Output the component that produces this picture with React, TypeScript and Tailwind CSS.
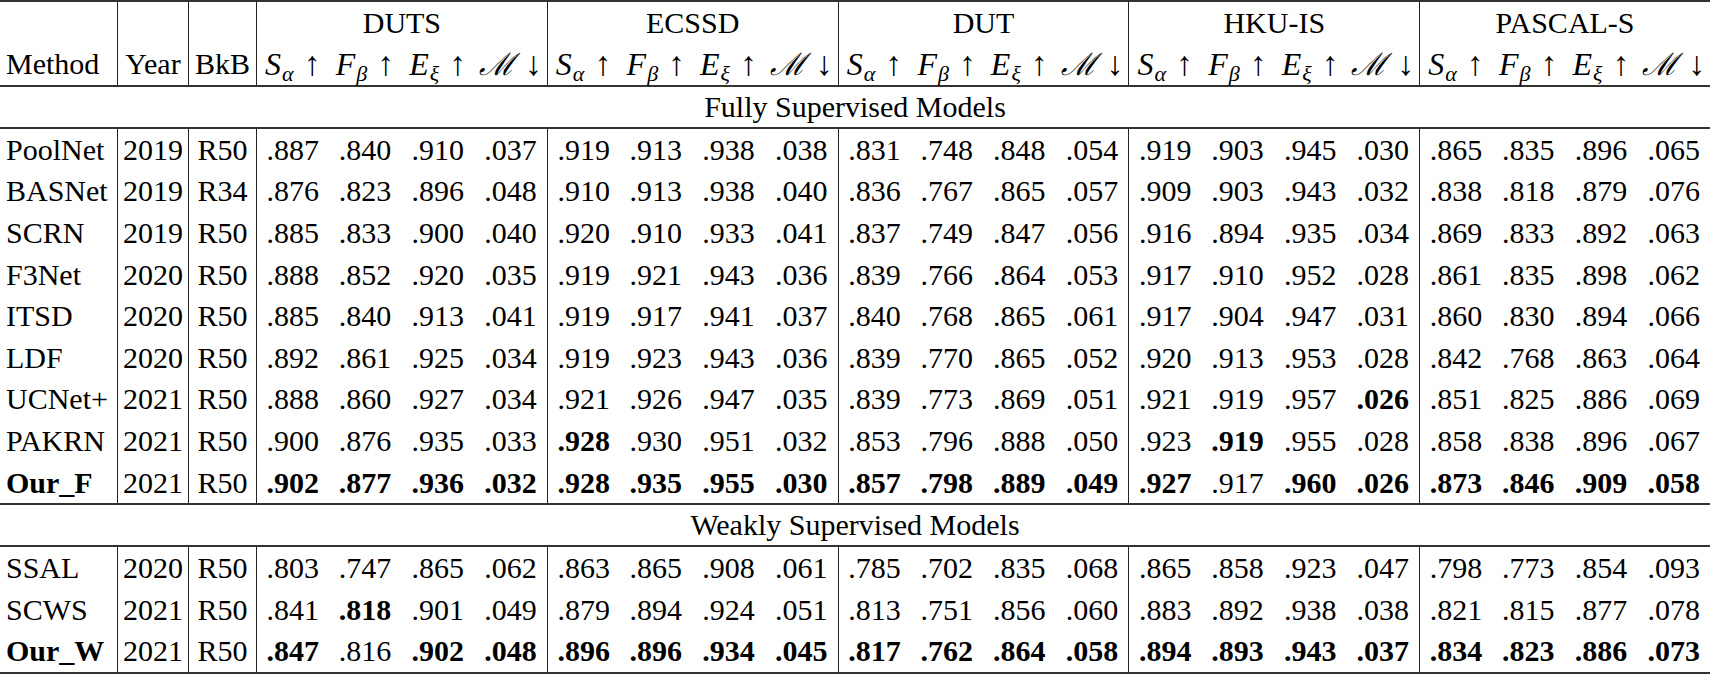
type Cell = { v: string; b?: boolean };

const cols = "grid grid-cols-[117px_71px_68px_repeat(20,minmax(0,1fr))]";
const datasets = ["DUTS", "ECSSD", "DUT", "HKU-IS", "PASCAL-S"];

// "*" marks a bold value
const parse = (s: string): Cell[] =>
  s.split(" ").map((t) => (t.startsWith("*") ? { v: t.slice(1), b: true } : { v: t }));

const fully: [string, string, string, string, boolean?][] = [
  ["PoolNet", "2019", "R50", ".887 .840 .910 .037 .919 .913 .938 .038 .831 .748 .848 .054 .919 .903 .945 .030 .865 .835 .896 .065"],
  ["BASNet", "2019", "R34", ".876 .823 .896 .048 .910 .913 .938 .040 .836 .767 .865 .057 .909 .903 .943 .032 .838 .818 .879 .076"],
  ["SCRN", "2019", "R50", ".885 .833 .900 .040 .920 .910 .933 .041 .837 .749 .847 .056 .916 .894 .935 .034 .869 .833 .892 .063"],
  ["F3Net", "2020", "R50", ".888 .852 .920 .035 .919 .921 .943 .036 .839 .766 .864 .053 .917 .910 .952 .028 .861 .835 .898 .062"],
  ["ITSD", "2020", "R50", ".885 .840 .913 .041 .919 .917 .941 .037 .840 .768 .865 .061 .917 .904 .947 .031 .860 .830 .894 .066"],
  ["LDF", "2020", "R50", ".892 .861 .925 .034 .919 .923 .943 .036 .839 .770 .865 .052 .920 .913 .953 .028 .842 .768 .863 .064"],
  ["UCNet+", "2021", "R50", ".888 .860 .927 .034 .921 .926 .947 .035 .839 .773 .869 .051 .921 .919 .957 *.026 .851 .825 .886 .069"],
  ["PAKRN", "2021", "R50", ".900 .876 .935 .033 *.928 .930 .951 .032 .853 .796 .888 .050 .923 *.919 .955 .028 .858 .838 .896 .067"],
  ["Our_F", "2021", "R50", "*.902 *.877 *.936 *.032 *.928 *.935 *.955 *.030 *.857 *.798 *.889 *.049 *.927 .917 *.960 *.026 *.873 *.846 *.909 *.058", true],
];

const weakly: [string, string, string, string, boolean?][] = [
  ["SSAL", "2020", "R50", ".803 .747 .865 .062 .863 .865 .908 .061 .785 .702 .835 .068 .865 .858 .923 .047 .798 .773 .854 .093"],
  ["SCWS", "2021", "R50", ".841 *.818 .901 .049 .879 .894 .924 .051 .813 .751 .856 .060 .883 .892 .938 .038 .821 .815 .877 .078"],
  ["Our_W", "2021", "R50", "*.847 .816 *.902 *.048 *.896 *.896 *.934 *.045 *.817 *.762 *.864 *.058 *.894 *.893 *.943 *.037 *.834 *.823 *.886 *.073", true],
];

function Metric({ l, sub, down }: { l: string; sub?: string; down?: boolean }) {
  return (
    <span className="flex items-baseline whitespace-nowrap">
      <span className={`italic ${sub ? "text-[32px]" : "text-[31px]"}`}>{l}</span>
      {sub && <span className="relative top-[6px] ml-[1px] text-[22px] italic">{sub}</span>}
      <span className="ml-[10px] text-[34px]">{down ? "↓" : "↑"}</span>
    </span>
  );
}

function Row({ r }: { r: [string, string, string, string, boolean?] }) {
  const vals = parse(r[3]);
  return (
    <div className={`${cols} h-[41.6px]`}>
      <div className={`flex items-center pl-[6px] ${r[4] ? "font-bold" : ""}`}>{r[0]}</div>
      <div className="flex items-center justify-center border-l border-[#222]">{r[1]}</div>
      <div className="flex items-center justify-center border-l border-[#222]">{r[2]}</div>
      {vals.map((c, i) => (
        <div
          key={i}
          className={`flex items-center justify-center ${i % 4 === 0 ? "border-l border-[#222]" : ""} ${c.b ? "font-bold" : ""}`}
        >
          {c.v}
        </div>
      ))}
    </div>
  );
}

export default function App() {
  return (
    <div className="w-[1710px] bg-white font-[family-name:Liberation_Serif,Times_New_Roman,serif] text-[30px] leading-none text-black">
      <div className="border-y-2 border-[#333]">
        <div className={`${cols} grid-rows-[40px_43px]`}>
          <div className="row-span-2 flex items-center pl-[6px] pt-[40px]">Method</div>
          <div className="row-span-2 flex items-center justify-center border-l border-[#222] pt-[40px]">Year</div>
          <div className="row-span-2 flex items-center justify-center border-l border-[#222] pt-[40px]">BkB</div>
          {datasets.map((d) => (
            <div key={d} className="col-span-4 flex items-center justify-center border-l border-[#222] pt-[2px]">
              {d}
            </div>
          ))}
          {datasets.map((d) => [
            <div key={d + "s"} className="flex items-center justify-center border-l border-[#222]">
              <Metric l="S" sub="α" />
            </div>,
            <div key={d + "f"} className="flex items-center justify-center">
              <Metric l="F" sub="β" />
            </div>,
            <div key={d + "e"} className="flex items-center justify-center">
              <Metric l="E" sub="ξ" />
            </div>,
            <div key={d + "m"} className="flex items-center justify-center">
              <Metric l="ℳ" down />
            </div>,
          ])}
        </div>
      </div>
      <div className="flex h-[40px] items-center justify-center">Fully Supervised Models</div>
      <div className="border-y-2 border-[#333]">
        {fully.map((r) => (
          <Row key={r[0]} r={r} />
        ))}
      </div>
      <div className="flex h-[40px] items-center justify-center">Weakly Supervised Models</div>
      <div className="border-y-2 border-[#333]">
        {weakly.map((r) => (
          <Row key={r[0]} r={r} />
        ))}
      </div>
    </div>
  );
}
